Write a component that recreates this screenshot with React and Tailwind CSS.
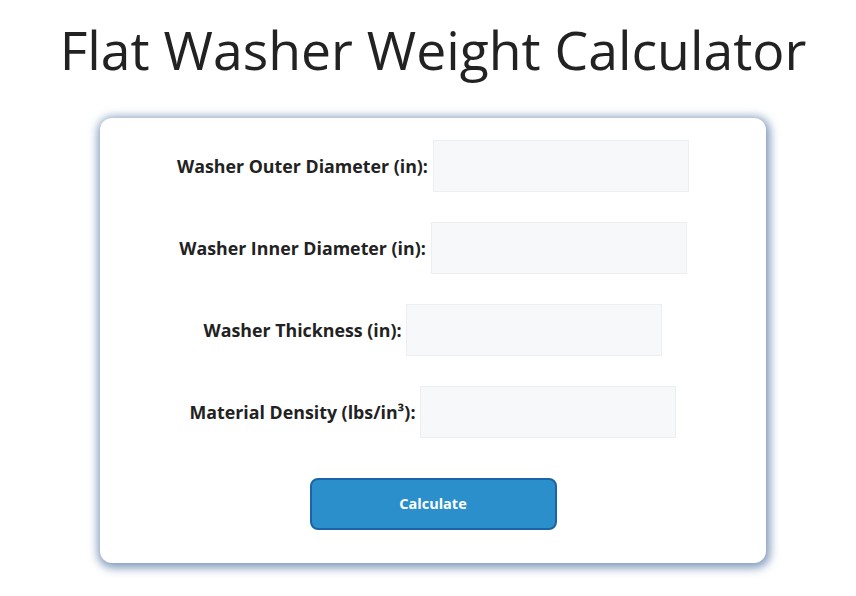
export default function App() {
  const rows = [
    ["Washer Outer Diameter (in):"],
    ["Washer Inner Diameter (in):"],
    ["Washer Thickness (in):"],
    ["Material Density (lbs/in³):"],
  ];
  return (
    <div className="min-h-[596px] w-[856px] bg-white pl-[10px] font-['Open_Sans',sans-serif] text-[#222]">
      <h1 className="pt-[14px] text-center text-[53.5px] leading-[72px] font-normal text-[#222]">
        Flat Washer Weight Calculator
      </h1>
      <div className="mx-auto mt-[32px] w-[666px] rounded-[12px] bg-white pt-[22px] pb-[33px] shadow-[1px_2px_10px_3px_rgba(60,100,150,0.65)]">
        <div className="flex flex-col items-center gap-[30px]">
          {rows.map(([label]) => (
            <div key={label} className="flex items-center gap-[5px]">
              <label className="text-[17.8px] font-bold text-[#222]">{label}</label>
              <input className="h-[52px] w-[256px] border border-[#eceef1] bg-[#f7f8fa] outline-none" />
            </div>
          ))}
        </div>
        <div className="mt-[40px] flex justify-center">
          <button className="h-[52px] w-[247px] rounded-[8px] border-2 border-[#1b64a6] bg-[#2b8fcb] text-[14.5px] font-bold text-white">
            Calculate
          </button>
        </div>
      </div>
    </div>
  );
}
